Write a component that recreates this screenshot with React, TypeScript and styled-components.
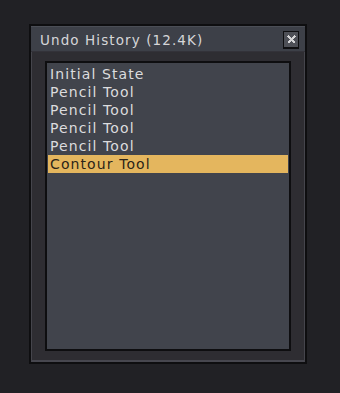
import React from "react";
import styled, { createGlobalStyle } from "styled-components";

const Global = createGlobalStyle`
  html, body { margin: 0; padding: 0; background: #212125; }
  body { width: 340px; height: 393px; overflow: hidden; }
`;

const Page = styled.div`
  padding: 24px 0 0 29px;
  font-family: "DejaVu Sans", sans-serif;
  -webkit-font-smoothing: none;
`;

const Window = styled.div`
  width: 274px;
  height: 336px;
  border: 2px solid #0e0e10;
  background: #2e2d32;
  display: flex;
  flex-direction: column;
`;

const TitleBar = styled.div`
  height: 24px;
  border-top: 1px solid #4b4e56;
  background: #3d4048;
  display: flex;
  align-items: center;
  justify-content: space-between;
  padding: 0 6px 0 9px;
  border-bottom: 1px solid #333239;
`;

const Title = styled.span`
  color: #d6d6d8;
  font-size: 13.5px;
  letter-spacing: 1.1px;
  margin-top: 2px;
`;

const CloseButton = styled.div`
  width: 14px;
  height: 15px;
  border: 1px solid #0e0e10;
  border-bottom-width: 2px;
  background: #4e5057;
  display: flex;
  align-items: center;
  justify-content: center;
  margin-top: 2px;
`;

const Body = styled.div`
  flex: 1;
  display: flex;
  padding: 9px 13px 9px 13px;
  border-left: 1px solid #45454c;
  border-right: 1px solid #45454c;
  border-bottom: 2px solid #47474f;
`;

const ListBox = styled.div`
  flex: 1;
  border: 2px solid #0e0e10;
  background: #41444c;
  padding: 2px 1px;
  display: flex;
  flex-direction: column;
`;

const Row = styled.div<{ $selected?: boolean }>`
  height: 18px;
  line-height: 18px;
  padding-left: 2px;
  font-size: 14px;
  letter-spacing: 1.1px;
  color: ${(p) => (p.$selected ? "#2b2418" : "#dcdcde")};
  background: ${(p) => (p.$selected ? "#e4b65e" : "transparent")};
`;

const items = [
  "Initial State",
  "Pencil Tool",
  "Pencil Tool",
  "Pencil Tool",
  "Pencil Tool",
  "Contour Tool",
];

export default function App() {
  return (
    <Page>
      <Global />
      <Window>
        <TitleBar>
          <Title>Undo History (12.4K)</Title>
          <CloseButton>
            <svg width="9" height="9" viewBox="0 0 9 9" shapeRendering="crispEdges">
              <path d="M1 1L8 8M8 1L1 8" stroke="#d4d4d6" strokeWidth="1.6" />
            </svg>
          </CloseButton>
        </TitleBar>
        <Body>
          <ListBox>
            {items.map((t, i) => (
              <Row key={i} $selected={i === items.length - 1}>
                {t}
              </Row>
            ))}
          </ListBox>
        </Body>
      </Window>
    </Page>
  );
}
